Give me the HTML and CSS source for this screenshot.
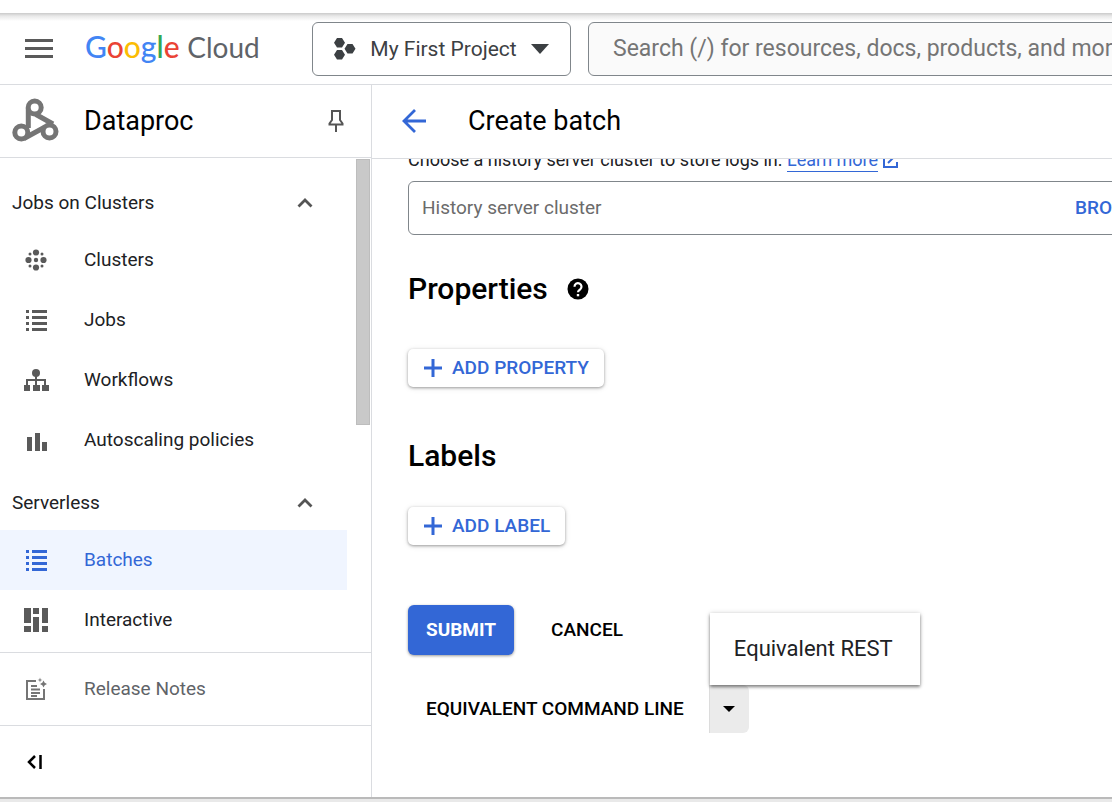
FILE: index.html
```html
<!DOCTYPE html>
<html lang="en">
<head>
    <meta charset="UTF-8">
    <meta name="viewport" content="width=device-width, initial-scale=1.0">
    <title>Create batch - Dataproc</title>
    <link rel="stylesheet" href="styles.css">
</head>
<body>
    <div class="window-top"></div>
    <header class="topbar">
        <button class="icon-button menu-button" aria-label="Main menu">
            <svg width="28" height="20" viewBox="0 0 28 20"><path d="M0 1.500h28M0 9.500h28M0 17.500h28" stroke="#5a5a5a" stroke-width="3"/></svg>
        </button>
        <a class="logo" href="#"><span class="google"><span class="blue">G</span><span class="red">o</span><span class="yellow">o</span><span class="blue">g</span><span class="green">l</span><span class="red">e</span></span> <span class="cloud">Cloud</span></a>
        <button class="project">
            <svg width="22" height="22" viewBox="0 0 22 22" fill="#3c4043"><path d="M3 0h5l3 4.700-3 4.700H3L0 4.700zM13.500 6h5l3 4.700-3 4.700h-5l-3-4.700zM3 12h5l3 4.700-3 4.700H3L0 16.700z"/></svg>
            <span>My First Project</span>
            <svg width="18" height="10" viewBox="0 0 18 10"><path d="M0 0h18L9 10z" fill="#3c4043"/></svg>
        </button>
        <input class="search" type="text" aria-label="Search" placeholder="Search (/) for resources, docs, products, and more">
    </header>
    <div class="layout">
        <aside class="sidebar">
            <div class="product">
                <svg class="product-icon" width="48" height="46" viewBox="0 0 48 46" fill="none" stroke="#757575" stroke-width="5">
                    <path d="M16.300 10v20M24 16.500l17 9.500M12 40.500l21-11.500"/>
                    <g fill="#fff"><circle cx="22.700" cy="9.500" r="6.500"/><circle cx="9.300" cy="34.500" r="6.500"/><circle cx="37.500" cy="33.500" r="6.500"/></g>
                </svg>
                <h2 class="title">Dataproc</h2>
                <button class="icon-button" aria-label="Pin menu">
                    <svg width="16" height="22" viewBox="0 0 16 22" fill="none" stroke="#555" stroke-width="2"><path d="M3 1h10M4 1v9L1.500 13.500v1h13v-1L12 10V1M8 14.500V22"/></svg>
                </button>
            </div>
            <nav class="nav">
                <button class="section">Jobs on Clusters
                    <svg width="16" height="10" viewBox="0 0 16 10"><path d="M1.500 8.500L8 2l6.500 6.500" fill="none" stroke="#555" stroke-width="2.800"/></svg>
                </button>
                <a class="item" href="#">
                    <svg width="26" height="26" viewBox="0 0 26 26" fill="#5a5a5a"><circle cx="13" cy="5.500" r="3.100"/><circle cx="5.500" cy="13" r="3.100"/><circle cx="20.500" cy="13" r="3.100"/><circle cx="13" cy="20.500" r="3.100"/><circle cx="13" cy="13" r="2.200"/><circle cx="7" cy="7" r="1.500"/><circle cx="19" cy="7" r="1.500"/><circle cx="7" cy="19" r="1.500"/><circle cx="19" cy="19" r="1.500"/></svg>
                    Clusters
                </a>
                <a class="item" href="#">
                    <svg width="26" height="26" viewBox="0 0 26 26" fill="currentColor"><path d="M3 3h3v3H3zM3 9h3v3H3zM3 15h3v3H3zM3 21h3v3H3zM9 3h15v3H9zM9 9h15v3H9zM9 15h15v3H9zM9 21h15v3H9z"/></svg>
                    Jobs
                </a>
                <a class="item" href="#">
                    <svg width="26" height="26" viewBox="0 0 26 26" fill="#5a5a5a"><circle cx="13" cy="6" r="4"/><path d="M12 8h2v4h9v6h3v6h-7v-6h2v-4h-7v4h3v6h-7v-6h2v-4H5v4h2v6H1v-6h2v-6h9z"/></svg>
                    Workflows
                </a>
                <a class="item" href="#">
                    <svg width="26" height="26" viewBox="0 0 26 26" fill="#5a5a5a"><path d="M4 10h5v14H4zM12 6h5v18h-5zM19 15h5v9h-5z"/></svg>
                    Autoscaling policies
                </a>
                <button class="section">Serverless
                    <svg width="16" height="10" viewBox="0 0 16 10"><path d="M1.500 8.500L8 2l6.500 6.500" fill="none" stroke="#555" stroke-width="2.800"/></svg>
                </button>
                <a class="item active" href="#">
                    <svg width="26" height="26" viewBox="0 0 26 26" fill="currentColor"><path d="M3 3h3v3H3zM3 9h3v3H3zM3 15h3v3H3zM3 21h3v3H3zM9 3h15v3H9zM9 9h15v3H9zM9 15h15v3H9zM9 21h15v3H9z"/></svg>
                    Batches
                </a>
                <a class="item" href="#">
                    <svg width="26" height="26" viewBox="0 0 26 26" fill="#5a5a5a"><path d="M1 1h7v15H1zM1 19h7v6H1zM10 1h6v6h-6zM10 10h6v15h-6zM19 1h6v15h-6zM19 19h6v6h-6z"/></svg>
                    Interactive
                </a>
                <div class="scrollbar"></div>
            </nav>
            <a class="item release" href="#">
                <svg width="26" height="26" viewBox="0 0 26 26" fill="none" stroke="#757575" stroke-width="2"><path d="M13 5H4v18h17V13M8 10h6M8 13.500h9M8 17h9M8 20h6"/><path d="M20.500 4.500l1.200 2.300 2.300 1.200-2.300 1.200-1.200 2.300-1.200-2.300L17 8l2.300-1.200zM17 1.500l.6 1.900 1.900.6-1.900.6-.6 1.900-.6-1.900-1.900-.6 1.900-.6z" fill="#757575" stroke="none"/></svg>
                Release Notes
            </a>
            <div class="collapse">
                <button class="icon-button" aria-label="Hide menu">
                    <svg width="16" height="14" viewBox="0 0 16 14" fill="none" stroke="#000" stroke-width="2.500"><path d="M8 1L2 7l6 6M13.500 0v14"/></svg>
                </button>
            </div>
        </aside>
        <main class="main">
            <div class="page-header">
                <a class="back" href="#" aria-label="Back">
                    <svg width="24" height="24" viewBox="0 0 24 24" fill="none" stroke="#3367d6" stroke-width="2.800"><path d="M24 12H2M13 1L2 12l11 11"/></svg>
                </a>
                <h1 class="title">Create batch</h1>
            </div>
            <div class="scroll">
                <form class="form">
                    <p class="hint">Choose a history server cluster to store logs in. <a href="#"><span>Learn more</span> <svg width="15" height="15" viewBox="0 0 15 15" fill="none" stroke="#3367d6" stroke-width="2"><path d="M6 1H1v13h13V9M9 1h5v5M14 1L5 10"/></svg></a></p>
                    <div class="field">
                        <input type="text" aria-label="History server cluster" placeholder="History server cluster">
                        <button type="button" class="browse">BROWSE</button>
                    </div>
                    <h2 class="heading">Properties
                        <svg width="22" height="22" viewBox="0 0 22 22"><circle cx="11" cy="11" r="10.500"/><path d="M7.500 8.700a3.500 3.500 0 1 1 5.700 2.600c-1.300 1-2.200 1.500-2.200 3" fill="none" stroke="#fff" stroke-width="2.200"/><path d="M9.800 16h2.400v2.300H9.800z" fill="#fff"/></svg>
                    </h2>
                    <button type="button" class="add">
                        <svg width="18" height="18" viewBox="0 0 18 18"><path d="M9 0v18M0 9h18" stroke="#3367d6" stroke-width="3"/></svg>
                        ADD PROPERTY
                    </button>
                    <h2 class="heading">Labels</h2>
                    <button type="button" class="add">
                        <svg width="18" height="18" viewBox="0 0 18 18"><path d="M9 0v18M0 9h18" stroke="#3367d6" stroke-width="3"/></svg>
                        ADD LABEL
                    </button>
                    <div class="actions">
                        <button type="button" class="submit">SUBMIT</button>
                        <button type="button" class="plain">CANCEL</button>
                    </div>
                    <div class="equivalent">
                        <button type="button" class="plain">EQUIVALENT COMMAND LINE</button>
                        <div class="split">
                            <button type="button" class="toggle" aria-label="More equivalents">
                                <svg width="12" height="6" viewBox="0 0 12 6"><path d="M0 0h12L6 6z"/></svg>
                            </button>
                            <div class="popup"><button type="button">Equivalent REST</button></div>
                        </div>
                    </div>
                </form>
            </div>
        </main>
    </div>
    <div class="window-bottom"></div>
</body>
</html>
```

FILE: styles.css
```css
* {
    box-sizing: border-box;
}
body {
    margin: 0;
    height: 100vh;
    display: flex;
    flex-direction: column;
    overflow: hidden;
    background: #fff;
    color: #202124;
    font-family: Roboto, sans-serif;
    font-size: 19px;
    line-height: 24px;
}
button, input {
    font: inherit;
    color: inherit;
    border: 0;
    background: none;
    padding: 0;
}
button {
    cursor: pointer;
}
a {
    color: #3367d6;
    text-decoration: none;
}
svg {
    flex: none;
}
h1, h2, p {
    margin: 0;
}
.icon-button {
    display: flex;
}
.window-top {
    flex: none;
    height: 13px;
}
.window-bottom {
    flex: none;
    height: 5px;
    background: #e9e9e9;
    border-top: 2px solid #bababa;
}

/* top bar */
.topbar {
    flex: none;
    display: flex;
    align-items: center;
    height: 72px;
    padding-left: 25px;
    background: linear-gradient(#cacaca, #e8e8e8 3px, #fff 8px);
    border-bottom: 1px solid #dadce0;
}
.logo {
    flex: none;
    width: 259px;
    padding: 0 0 4px 32px;
    color: #5f6368;
    font-family: Lato, sans-serif;
    font-size: 30px;
    line-height: 36px;
    white-space: nowrap;
}
.google {
    font-weight: 500;
}
.cloud {
    font-size: 28px;
}
.blue { color: #4285f4; }
.red { color: #ea4335; }
.yellow { color: #fbbc04; }
.green { color: #34a853; }
.project {
    flex: none;
    display: flex;
    align-items: center;
    justify-content: space-between;
    width: 259px;
    height: 54px;
    padding: 0 21px;
    border: 1px solid #80868b;
    border-radius: 6px;
    background: #fff;
    color: #3c4043;
    font-size: 21px;
}
.search {
    flex: none;
    width: 620px;
    height: 54px;
    margin-left: 17px;
    padding: 0 24px;
    border: 1px solid #80868b;
    border-radius: 6px;
    background: #fafafa;
    font-size: 23px;
}
.search::placeholder {
    color: #757575;
}
.layout {
    flex: 1;
    min-height: 0;
    display: flex;
}

/* sidebar */
.sidebar {
    flex: none;
    width: 372px;
    display: flex;
    flex-direction: column;
    border-right: 1px solid #dadce0;
}
.product {
    flex: none;
    display: flex;
    align-items: center;
    height: 73px;
    padding: 0 27px 0 12px;
    border-bottom: 1px solid #dadce0;
}
.title {
    color: #000;
    font-size: 27px;
    font-weight: 400;
    line-height: 32px;
}
.product .title {
    flex: 1;
    margin-left: 24px;
}
.nav {
    flex: 1;
    min-height: 0;
    position: relative;
    overflow: hidden;
    padding: 12px 24px 0 0;
}
.section {
    display: flex;
    align-items: center;
    justify-content: space-between;
    width: 100%;
    height: 54px;
    margin-top: 6px;
    padding: 0 34px 0 12px;
}
.item {
    display: flex;
    align-items: center;
    gap: 35px;
    height: 60px;
    padding-left: 23px;
    color: #202124;
}
.item svg {
    color: #5a5a5a;
}
.active, .active svg {
    background: #f0f5ff;
    color: #3367d6;
}
.scrollbar {
    position: absolute;
    top: 1px;
    right: 1px;
    width: 14px;
    height: 266px;
    background: #c9c9c9;
    border: 1px solid #bdbdbd;
}
.release {
    flex: none;
    height: 73px;
    border-top: 1px solid #dadce0;
    color: #5f6368;
}
.collapse {
    flex: none;
    display: flex;
    align-items: center;
    height: 72px;
    padding-left: 27px;
    border-top: 1px solid #dadce0;
}

/* main panel */
.main {
    flex: 1;
    min-width: 0;
    display: flex;
    flex-direction: column;
}
.page-header {
    flex: none;
    display: flex;
    align-items: center;
    gap: 42px;
    height: 74px;
    padding: 0 0 2px 30px;
    border-bottom: 1px solid #dadce0;
}
.back {
    display: flex;
}
.scroll {
    flex: 1;
    min-height: 0;
    overflow: hidden;
    padding-left: 36px;
}
/* form is scrolled a little under the page header */
.form {
    width: 768px;
    margin-top: -11px;
}
.hint {
    height: 33px;
    font-size: 18px;
}
.hint span {
    display: inline-block;
    height: 24px;
    border-bottom: 1px solid #3367d6;
}
.hint svg {
    vertical-align: -2px;
}
.field {
    display: flex;
    height: 54px;
    border: 1px solid #80868b;
    border-radius: 6px;
}
.field input {
    flex: 1;
    padding-left: 13px;
}
.field input::placeholder {
    color: #6b6b6b;
}
.browse {
    padding-right: 24px;
    color: #3367d6;
    font-weight: 500;
}
.heading {
    display: flex;
    align-items: center;
    gap: 19px;
    margin: 36px 0 42px;
    color: #000;
    font-size: 30px;
    font-weight: 500;
    line-height: 36px;
}
.add {
    display: flex;
    align-items: center;
    gap: 10px;
    height: 38px;
    padding: 0 15px 0 16px;
    border-radius: 5px;
    box-shadow: 0 1px 3px rgba(0, 0, 0, 0.35), 0 1px 6px rgba(0, 0, 0, 0.1);
    color: #3367d6;
    font-weight: 500;
}
.add + .heading {
    margin-top: 51px;
    margin-bottom: 33px;
}
.actions {
    display: flex;
    margin-top: 60px;
}
.submit {
    height: 50px;
    padding: 0 18px;
    border-radius: 6px;
    background: #3367d6;
    box-shadow: 0 1px 3px rgba(0, 0, 0, 0.4);
    color: #fff;
    font-weight: 700;
}
.plain {
    padding: 0 18px;
    color: #000;
    font-weight: 500;
}
.actions .plain {
    margin-left: 19px;
}
.equivalent {
    display: flex;
    height: 48px;
    margin-top: 30px;
}
.equivalent .plain {
    padding-right: 25px;
}
.split {
    position: relative;
    display: flex;
}
.toggle {
    width: 40px;
    border-left: 1px solid #dcdcdc;
    border-radius: 0 6px 6px 0;
    background: #ebebeb;
}
.toggle svg {
    display: block;
    margin: 0 auto;
}
.popup {
    position: absolute;
    left: 1px;
    bottom: 48px;
    min-width: 210px;
    padding: 20px 24px;
    background: #fff;
    box-shadow: 0 2px 3px rgba(0, 0, 0, 0.45), 0 0 5px rgba(0, 0, 0, 0.15);
    color: #202124;
    font-size: 22px;
    line-height: 32px;
    white-space: nowrap;
}
```
